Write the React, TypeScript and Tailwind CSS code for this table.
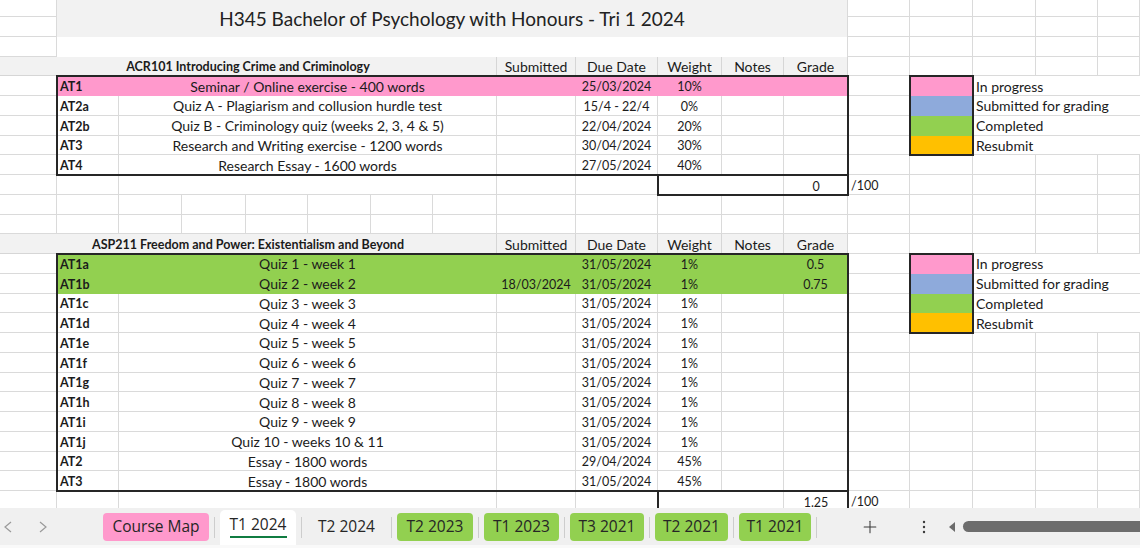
import React from 'react';
import { Plus } from 'lucide-react';

interface Assessment {
  id: string;
  name: string;
  submitted?: string;
  due: string;
  weight: string;
  grade?: string;
  fill?: 'pink' | 'green';
}

const GRID = 'border-r border-b border-[#dadada]';
const H = 'h-[19.75px]';
const RIGHT_COLS = ['w-[62px]', 'w-[63px]', 'w-[63px]', 'w-[62px]', 'w-[42px]'];
const ALL_COLS = [
  'w-[57px]', 'w-[62px]', 'w-[63px]', 'w-[64px]', 'w-[62px]', 'w-[63px]', 'w-[62px]', 'w-[64px]',
  'w-[79px]', 'w-[82px]', 'w-[64px]', 'w-[62px]', 'w-[64px]', ...RIGHT_COLS,
];
const HEAD_COLS = [
  { label: 'Submitted', w: 'w-[79px]' },
  { label: 'Due Date', w: 'w-[82px]' },
  { label: 'Weight', w: 'w-[64px]' },
  { label: 'Notes', w: 'w-[62px]' },
  { label: 'Grade', w: 'w-[64px]' },
];

const crime: Assessment[] = [
  { id: 'AT1', name: 'Seminar / Online exercise - 400 words', due: '25/03/2024', weight: '10%', fill: 'pink' },
  { id: 'AT2a', name: 'Quiz A - Plagiarism and collusion hurdle test', due: '15/4 - 22/4', weight: '0%' },
  { id: 'AT2b', name: 'Quiz B - Criminology quiz (weeks 2, 3, 4 & 5)', due: '22/04/2024', weight: '20%' },
  { id: 'AT3', name: 'Research and Writing exercise - 1200 words', due: '30/04/2024', weight: '30%' },
  { id: 'AT4', name: 'Research Essay - 1600 words', due: '27/05/2024', weight: '40%' },
];

const freedom: Assessment[] = [
  { id: 'AT1a', name: 'Quiz 1 - week 1', due: '31/05/2024', weight: '1%', grade: '0.5', fill: 'green' },
  { id: 'AT1b', name: 'Quiz 2 - week 2', submitted: '18/03/2024', due: '31/05/2024', weight: '1%', grade: '0.75', fill: 'green' },
  { id: 'AT1c', name: 'Quiz 3 - week 3', due: '31/05/2024', weight: '1%' },
  { id: 'AT1d', name: 'Quiz 4 - week 4', due: '31/05/2024', weight: '1%' },
  { id: 'AT1e', name: 'Quiz 5 - week 5', due: '31/05/2024', weight: '1%' },
  { id: 'AT1f', name: 'Quiz 6 - week 6', due: '31/05/2024', weight: '1%' },
  { id: 'AT1g', name: 'Quiz 7 - week 7', due: '31/05/2024', weight: '1%' },
  { id: 'AT1h', name: 'Quiz 8 - week 8', due: '31/05/2024', weight: '1%' },
  { id: 'AT1i', name: 'Quiz 9 - week 9', due: '31/05/2024', weight: '1%' },
  { id: 'AT1j', name: 'Quiz 10 - weeks 10 & 11', due: '31/05/2024', weight: '1%' },
  { id: 'AT2', name: 'Essay - 1800 words', due: '29/04/2024', weight: '45%' },
  { id: 'AT3', name: 'Essay - 1800 words', due: '31/05/2024', weight: '45%' },
];

const legend = [
  { label: 'In progress', color: 'bg-[#ff99cc]' },
  { label: 'Submitted for grading', color: 'bg-[#8eaadb]' },
  { label: 'Completed', color: 'bg-[#92d050]' },
  { label: 'Resubmit', color: 'bg-[#ffc000]' },
];

const fills = {
  pink: 'bg-[#ff99cc] border-[#ff99cc]',
  green: 'bg-[#92d050] border-[#92d050]',
};

const tabs = [
  { label: 'Course Map', w: 'w-[106px]', tone: 'bg-[#ff99cc]' },
  { label: 'T1 2024', w: 'w-[76px]', active: true },
  { label: 'T2 2024', w: 'w-[79px]' },
  { label: 'T2 2023', w: 'w-[76px]', tone: 'bg-[#92d050]' },
  { label: 'T1 2023', w: 'w-[75px]', tone: 'bg-[#92d050]' },
  { label: 'T3 2021', w: 'w-[74px]', tone: 'bg-[#92d050]' },
  { label: 'T2 2021', w: 'w-[73px]', tone: 'bg-[#92d050]' },
  { label: 'T1 2021', w: 'w-[72px]', tone: 'bg-[#92d050]' },
];

// cells sit on a common baseline, like Excel's bottom alignment;
// numbers and bold labels run narrower than plain text
const NUM = 'text-[12.5px] items-end pb-[1.5px]';
const TXT = 'items-end pb-[1.5px]';

const RightCells = ({ h = H }: { h?: string }) => (
  <>
    {RIGHT_COLS.map((w, i) => (
      <div key={i} className={`${w} ${h} shrink-0 ${GRID}`} />
    ))}
  </>
);

const BlankRow = () => (
  <div className="flex">
    {ALL_COLS.map((w, i) => (
      <div key={i} className={`${w} ${H} shrink-0 ${GRID}`} />
    ))}
  </div>
);

const HeaderRow = ({ title }: { title: string }) => (
  <div className="flex">
    <div className={`w-[497px] ${H} shrink-0 bg-[#f2f2f2] border-r border-b border-[#d6d6d6] flex justify-center font-bold ${NUM}`}>
      {title}
    </div>
    {HEAD_COLS.map((c) => (
      <div key={c.label} className={`${c.w} ${H} shrink-0 bg-[#f2f2f2] border-r border-b border-[#d6d6d6] flex justify-center ${TXT}`}>
        {c.label}
      </div>
    ))}
    <RightCells />
  </div>
);

const AssessmentRow = ({ row }: { row: Assessment }) => {
  const tone = row.fill ? fills[row.fill] : 'border-[#dadada]';
  const cell = `${H} shrink-0 flex border-r border-b ${tone}`;
  return (
    <div className="flex">
      <div className={`w-[62px] ${cell} pl-[3px] font-bold ${NUM}`}>{row.id}</div>
      <div className={`w-[378px] ${cell} justify-center ${TXT}`}>{row.name}</div>
      <div className={`w-[79px] ${cell} justify-center ${NUM}`}>{row.submitted}</div>
      <div className={`w-[82px] ${cell} justify-center ${NUM}`}>{row.due}</div>
      <div className={`w-[64px] ${cell} justify-center ${NUM}`}>{row.weight}</div>
      <div className={`w-[62px] ${cell}`} />
      <div className={`w-[64px] ${cell} justify-center ${NUM}`}>{row.grade}</div>
    </div>
  );
};

const Band = ({ rows }: { rows: Assessment[] }) => (
  <div className="flex">
    <div className="flex flex-col">
      {rows.map((r) => (
        <div key={r.id + r.due} className={`w-[57px] ${H} ${GRID}`} />
      ))}
    </div>
    <div className="flex flex-col w-[791px] relative z-10 outline-2 outline-[#262626] -outline-offset-1">
      {rows.map((r) => (
        <AssessmentRow key={r.id + r.due} row={r} />
      ))}
    </div>
    <div className="flex flex-col">
      {rows.map((r) => (
        <div key={r.id + r.due} className={`w-[62px] ${H} ${GRID}`} />
      ))}
    </div>
    <div className="flex flex-col">
      <div className="flex flex-col relative z-10 outline-2 outline-[#262626] -outline-offset-1">
        {legend.map((l) => (
          <div key={l.label} className={`w-[63px] ${H} ${l.color}`} />
        ))}
      </div>
      {rows.slice(4).map((r) => (
        <div key={r.id + r.due} className={`w-[63px] ${H} ${GRID}`} />
      ))}
    </div>
    <div className="flex flex-col">
      {legend.map((l) => (
        <div key={l.label} className={`w-[167px] ${H} border-b border-[#dadada] flex pl-[3px] ${TXT}`}>
          {l.label}
        </div>
      ))}
      {rows.slice(4).map((r) => (
        <div key={r.id + r.due} className="flex">
          <div className={`w-[63px] ${H} ${GRID}`} />
          <div className={`w-[62px] ${H} ${GRID}`} />
          <div className={`w-[42px] ${H} ${GRID}`} />
        </div>
      ))}
    </div>
  </div>
);

const TotalRow = ({ total }: { total: string }) => (
  <div className="flex">
    <div className={`w-[57px] ${H} shrink-0 ${GRID}`} />
    <div className={`w-[62px] ${H} shrink-0 ${GRID}`} />
    <div className={`w-[378px] ${H} shrink-0 ${GRID}`} />
    <div className={`w-[79px] ${H} shrink-0 ${GRID}`} />
    <div className={`w-[82px] ${H} shrink-0 ${GRID}`} />
    <div className="flex w-[190px] shrink-0 relative z-10 outline-2 outline-[#262626] -outline-offset-1">
      <div className={`w-[126px] ${H} border-r border-[#dadada]`} />
      <div className={`w-[64px] ${H} flex justify-center ${NUM}`}>{total}</div>
    </div>
    <div className={`w-[62px] ${H} shrink-0 ${GRID} flex pl-[3px] ${NUM}`}>/100</div>
    <div className={`w-[63px] ${H} shrink-0 ${GRID}`} />
    <div className={`w-[63px] ${H} shrink-0 ${GRID}`} />
    <div className={`w-[62px] ${H} shrink-0 ${GRID}`} />
    <div className={`w-[42px] ${H} shrink-0 ${GRID}`} />
  </div>
);

const Sheet = () => (
  <div className="h-[508px] w-[1140px] overflow-hidden bg-white font-['Lato',sans-serif] text-[14px] leading-none text-[#1b1b1b]">
    <div className="flex">
      <div className="flex flex-col">
        <div className={`w-[57px] h-[17px] ${GRID}`} />
        <div className={`w-[57px] ${H} ${GRID}`} />
      </div>
      <div className="w-[791px] h-[36.75px] shrink-0 bg-[#f2f2f2] border-r border-[#dadada] flex items-center justify-center text-[19px] text-[#222]">
        H345 Bachelor of Psychology with Honours - Tri 1 2024
      </div>
      <div className="flex flex-col">
        <div className="flex">
          <RightCells h="h-[17px]" />
        </div>
        <div className="flex">
          <RightCells />
        </div>
      </div>
    </div>
    <div className="flex">
      <div className={`w-[57px] ${H} shrink-0 ${GRID}`} />
      <div className={`w-[791px] ${H} shrink-0 border-r border-[#dadada]`} />
      <RightCells />
    </div>
    <HeaderRow title="ACR101 Introducing Crime and Criminology" />
    <Band rows={crime} />
    <TotalRow total="0" />
    <BlankRow />
    <BlankRow />
    <HeaderRow title="ASP211 Freedom and Power: Existentialism and Beyond" />
    <Band rows={freedom} />
    <TotalRow total="1.25" />
  </div>
);

const Chevron = ({ dir }: { dir: 'left' | 'right' }) => (
  <svg width="10" height="12" viewBox="0 0 10 12" fill="none" stroke="#9a9a9a" strokeWidth="1.2">
    <path d={dir === 'left' ? 'M8 1 L2 6 L8 11' : 'M2 1 L8 6 L2 11'} />
  </svg>
);

const TabBar = () => (
  <div className="h-[40px] w-[1140px] overflow-hidden flex flex-col font-['Open_Sans',sans-serif] text-[15.5px] text-[#262626]">
    <div className="h-[37px] bg-[#f0f0f0] flex items-start">
      <div className="w-[103px] h-full flex items-center pl-[3px] gap-[25px] shrink-0">
        <Chevron dir="left" />
        <Chevron dir="right" />
      </div>
      {tabs.map((t) => (
        <React.Fragment key={t.label}>
          {t.active ? (
            <div className={`${t.w} shrink-0 mt-[2px] h-[35px] bg-white rounded-t-[5px] flex flex-col items-center pt-[4px]`}>
              <span className="leading-[20px]">{t.label}</span>
              <span className="mt-[2px] h-[2px] w-[57px] bg-[#107c41]" />
            </div>
          ) : (
            <div className={`${t.w} shrink-0 mt-[5px] h-[28px] rounded-[4px] flex items-center justify-center ${t.tone ?? ''}`}>
              {t.label}
            </div>
          )}
          <div className="mx-[5px] mt-[9px] h-[21px] w-px shrink-0 bg-[#cdcdcd]" />
        </React.Fragment>
      ))}
      <div className="ml-[38px] h-full flex items-center shrink-0 text-[#3a3a3a]">
        <Plus size={20} strokeWidth={1.25} />
      </div>
      <div className="ml-[42px] h-full flex items-center shrink-0">
        <svg width="4" height="16" viewBox="0 0 4 16" fill="#3a3a3a">
          <circle cx="2" cy="3" r="1.2" />
          <circle cx="2" cy="8" r="1.2" />
          <circle cx="2" cy="13" r="1.2" />
        </svg>
      </div>
      <div className="ml-[22px] h-full flex items-center shrink-0">
        <svg width="8" height="12" viewBox="0 0 8 12" fill="#6b6b6b">
          <path d="M7 1 L1 6 L7 11 Z" />
        </svg>
      </div>
      <div className="ml-[7px] h-full flex items-center shrink-0">
        <div className="w-[200px] h-[11px] rounded-full bg-[#6d6d6d]" />
      </div>
    </div>
    <div className="h-[3px] bg-[#f9f9f9]" />
  </div>
);

export default function App() {
  return (
    <div className="w-[1140px] h-[548px] overflow-hidden bg-white">
      <Sheet />
      <TabBar />
    </div>
  );
}
